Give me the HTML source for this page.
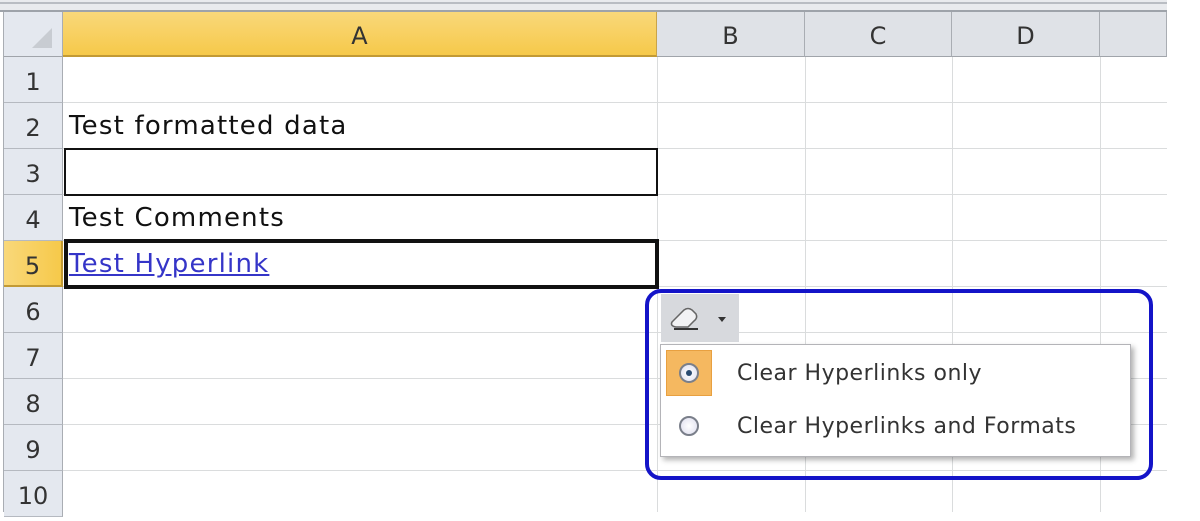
<!DOCTYPE html>
<html><head><style>
*{margin:0;padding:0;box-sizing:border-box}
body{width:1200px;height:512px;overflow:hidden;background:#fff;position:relative;font-family:"DejaVu Sans","Liberation Sans",sans-serif}
.a{position:absolute}
.hl{position:absolute;height:1px;background:#dadcdd}
.vl{position:absolute;width:1px;background:#dadcdd}
.rh{position:absolute;left:4px;width:59px;height:46px;background:#e4e8ef;border-bottom:1px solid #b5b9c0;border-right:1px solid #a9adb3;color:#333;font-size:24px;text-align:center;line-height:50px}
.ch{position:absolute;top:12px;height:45px;background:#dfe2e7;border-right:1px solid #a9adb3;border-bottom:1px solid #a0a4aa;color:#333;font-size:24px;text-align:center;line-height:48px}
.t{position:absolute;left:69px;font-size:26px;letter-spacing:1.2px;color:#111}
</style></head><body>
<div class="a" style="left:0;top:0;width:1167px;height:12px;background:#e9ebee;border-bottom:2px solid #9ea3aa"></div>
<div class="a" style="left:0;top:2px;width:1167px;height:2px;background:#b9bdc3"></div>
<div class="a" style="left:3px;top:12px;width:1px;height:500px;background:#a9adb3"></div>
<div class="a" style="left:4px;top:12px;width:59px;height:45px;background:#e4e8ef;border-right:1px solid #a9adb3;border-bottom:1px solid #a0a4aa"></div>
<div class="a" style="left:32px;top:28px;width:0;height:0;border-left:20px solid transparent;border-bottom:20px solid #c8ccd2"></div>
<div class="ch" style="left:63px;width:594px;background:linear-gradient(#f9d87a,#f6c94a);border-right:1px solid #c9a44a;border-bottom:2px solid #c29a35">A</div>
<div class="ch" style="left:657px;width:148px">B</div>
<div class="ch" style="left:805px;width:147px">C</div>
<div class="ch" style="left:952px;width:148px">D</div>
<div class="ch" style="left:1100px;width:67px"></div>
<div class="vl" style="left:657px;top:57px;height:455px"></div>
<div class="vl" style="left:805px;top:57px;height:455px"></div>
<div class="vl" style="left:952px;top:57px;height:455px"></div>
<div class="vl" style="left:1100px;top:57px;height:455px"></div>
<div class="hl" style="left:63px;top:102px;width:1104px"></div>
<div class="hl" style="left:63px;top:148px;width:1104px"></div>
<div class="hl" style="left:63px;top:194px;width:1104px"></div>
<div class="hl" style="left:63px;top:240px;width:1104px"></div>
<div class="hl" style="left:63px;top:286px;width:1104px"></div>
<div class="hl" style="left:63px;top:332px;width:1104px"></div>
<div class="hl" style="left:63px;top:378px;width:1104px"></div>
<div class="hl" style="left:63px;top:424px;width:1104px"></div>
<div class="hl" style="left:63px;top:470px;width:1104px"></div>
<div class="rh" style="top:57px">1</div>
<div class="rh" style="top:103px">2</div>
<div class="rh" style="top:149px">3</div>
<div class="rh" style="top:195px">4</div>
<div class="rh" style="top:241px;background:linear-gradient(90deg,#f9d87a,#f6c94a);border-bottom:2px solid #c29a35;border-right:2px solid #c29a35">5</div>
<div class="rh" style="top:287px">6</div>
<div class="rh" style="top:333px">7</div>
<div class="rh" style="top:379px">8</div>
<div class="rh" style="top:425px">9</div>
<div class="rh" style="top:471px">10</div>
<div class="t" style="top:111px">Test formatted data</div>
<div class="a" style="left:64px;top:148px;width:594px;height:48px;border:2px solid #111"></div>
<div class="t" style="top:203px">Test Comments</div>
<div class="a" style="left:64px;top:239px;width:595px;height:50px;border:4px solid #111"></div>
<div class="t" style="top:249px;color:#3535c8;text-decoration:underline">Test Hyperlink</div>
<div class="a" style="left:645px;top:289px;width:508px;height:191px;border:4px solid #1414c8;border-radius:16px"></div>
<div class="a" style="left:661px;top:294px;width:78px;height:48px;background:#d7d9dd"></div>
<svg class="a" style="left:668px;top:302px" width="64" height="32" viewBox="0 0 64 32">
<path d="M4 20 L16 8 Q20 5 24 8 L28 12 Q30 16 26 19 L20 25 L8 25 Q2 24 4 20Z" fill="#f2f2f4" stroke="#666" stroke-width="1.5"/>
<path d="M6 27 L30 27" stroke="#333" stroke-width="2"/>
<path d="M50 15 L58 15 L54 20Z" fill="#333"/>
</svg>
<div class="a" style="left:660px;top:344px;width:471px;height:113px;background:#fff;border:1px solid #b4b4b8;box-shadow:3px 3px 5px rgba(0,0,0,.3)"></div>
<div class="a" style="left:666px;top:350px;width:46px;height:46px;background:#f5b860;border:1px solid #e8a040"></div>
<div class="a" style="left:679px;top:363px;width:20px;height:20px;border-radius:50%;background:radial-gradient(#fff,#dde);border:2px solid #7a7f8a"></div>
<div class="a" style="left:686px;top:370px;width:6px;height:6px;border-radius:50%;background:#2a4a70"></div>
<div class="a" style="left:679px;top:416px;width:20px;height:20px;border-radius:50%;background:radial-gradient(#fff,#dde);border:2px solid #7a7f8a"></div>
<div class="a" style="left:737px;top:361px;font-size:22px;letter-spacing:0.5px;color:#333">Clear Hyperlinks only</div>
<div class="a" style="left:737px;top:414px;font-size:22px;letter-spacing:0.5px;color:#333">Clear Hyperlinks and Formats</div>
</body></html>
